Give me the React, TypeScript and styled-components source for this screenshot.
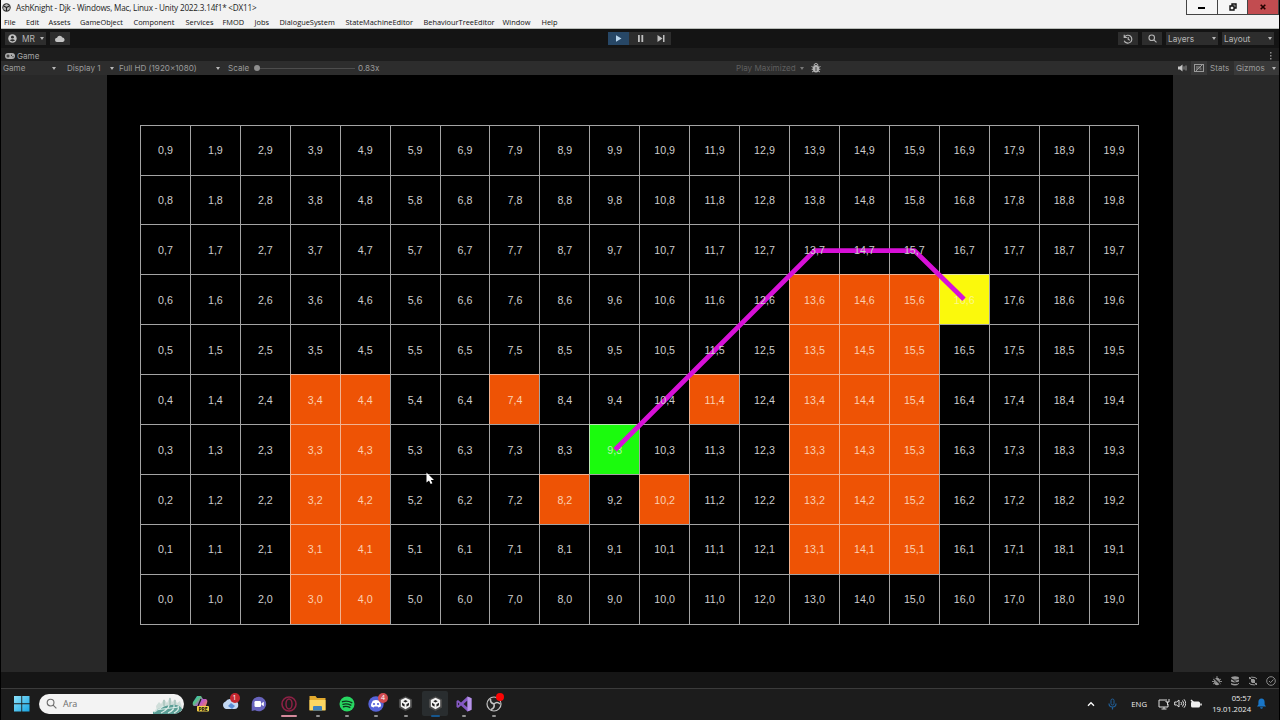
import React from 'react';
import styled, { createGlobalStyle } from 'styled-components';

const Global = createGlobalStyle`
  * { box-sizing: border-box; }
  body { margin: 0; background: #000; overflow: hidden; }
`;

const Screen = styled.div`
  width: 1280px; height: 720px; background: #000; padding: 0 1px;
  display: flex; flex-direction: column; font-family: Inter, Roboto, sans-serif;
`;
const WindowHead = styled.header`
  height: 29px; flex: none; background: #f2f2f2; border-bottom: 1px solid #b9bdb9;
  display: flex; justify-content: space-between;
  font-family: 'Open Sans', 'Noto Sans', sans-serif; color: #1c1c1c;
`;
const HeadLeft = styled.div`display: flex; flex-direction: column;`;
const TitleRow = styled.div`
  height: 15px; display: flex; align-items: center; gap: 5px; padding-left: 1px;
  font-size: 8.2px; letter-spacing: -0.21px; white-space: nowrap;
`;
const MenuRow = styled.nav`
  display: grid; height: 13px; align-items: center; padding-left: 3px;
  grid-template-columns: 22px 22.5px 31.5px 53.5px 52px 37px 32px 25px 66px 78px 79px 39px 40px;
  font-size: 7.4px; white-space: nowrap; color: #111;
`;
const WindowButtons = styled.div`display: flex; height: 15px; width: 93px; border: 1px solid #444; border-top: 0;`;
const WindowButton = styled.div<{ $close?: boolean }>`
  flex: 1; display: flex; align-items: center; justify-content: center;
  background: ${p => (p.$close ? '#c24c50' : '#f6f6f6')};
  & + & { border-left: 1px solid #444; }
`;

const Toolbar = styled.div`
  height: 19px; flex: none; background: #141414; display: grid; align-items: center;
  grid-template-columns: 1fr 63px 1fr; padding: 0 5px 0 4px;
`;
const Group = styled.div<{ $end?: boolean; $gap?: number }>`
  display: flex; align-items: center; gap: ${p => p.$gap ?? 4}px; justify-content: ${p => (p.$end ? 'flex-end' : 'flex-start')};
`;
const ToolButton = styled.div<{ $w: number; $on?: boolean; $spread?: boolean }>`
  width: ${p => p.$w}px; height: 13px; padding: 0 2px; display: flex; align-items: center;
  justify-content: ${p => (p.$spread ? 'space-between' : 'center')};
  background: ${p => (p.$on ? '#274766' : '#2d2d2d')}; color: #b6b6b6; font-size: 8.3px;
`;
const Caret = styled.i<{ $dim?: boolean }>`
  border: 2.5px solid transparent; border-top: 3px solid ${p => (p.$dim ? '#777' : '#b8b8b8')}; border-bottom: 0;
`;
const TabRow = styled.div`
  height: 13px; flex: none; background: #1d1d1d; color: #a5a5a5; font-size: 8.1px;
  display: flex; align-items: center; justify-content: space-between; padding: 2px 7px 0 4px;
`;
const Tab = styled.div`display: flex; align-items: center; gap: 2px;`;
const Options = styled.div`
  height: 14px; flex: none; background: #2d2d2d; color: #9b9b9b; font-size: 8.1px;
  display: flex; align-items: center; white-space: nowrap;
`;
const Option = styled.div<{ $w: number; $dim?: boolean; $lit?: boolean; $pad?: number; $indent?: number }>`
  width: ${p => p.$w}px; height: 14px; display: flex; align-items: center; justify-content: space-between;
  padding: 0 ${p => p.$pad ?? 2}px 0 ${p => p.$indent ?? p.$pad ?? 2}px;
  color: ${p => (p.$dim ? '#5f5f5f' : 'inherit')}; background: ${p => (p.$lit ? '#393939' : 'none')};
`;
const BugOption = styled(Option)`
  justify-content: flex-end; margin-right: 351px;
`;
const Slider = styled.div`
  width: 101px; height: 6px; margin: 0 3px; display: flex; align-items: center;
  &::before { content: ''; width: 6px; height: 6px; border-radius: 3px; background: #8f8f8f; }
  &::after { content: ''; flex: 1; height: 1px; background: #4d4d4d; }
`;
const Spring = styled.div`flex: 1;`;

const Viewport = styled.main`
  height: 597px; flex: none; background: #282828; padding: 0 106px; display: flex;
`;
const Camera = styled.div`flex: 1; background: #000; padding: 49.6px 0 0 33px;`;
const Board = styled.div`
  position: relative; width: 999px; height: 500px; display: grid;
  grid-template-columns: repeat(20, 49.93px); grid-template-rows: repeat(10, 49.93px);
`;
const fills: Record<string, string> = { wall: '#ee5305', start: '#1bfb0d', goal: '#fbf90c', open: '#000' };
const rules: Record<string, string> = { wall: '#f2b291', start: '#b9e6b4', goal: '#e4e4a0', open: '#a4a4a4' };
const inks: Record<string, string> = { wall: '#fbd0b2', start: '#b4f9ae', goal: '#fbf88a', open: '#cdcdcd' };
const Cell = styled.div<{ $kind: string }>`
  background: ${p => fills[p.$kind]};
  box-shadow: inset 1px 1px 0 ${p => rules[p.$kind]};
  display: flex; align-items: center; justify-content: center; padding: 1px 0 0 1px;
  font: 10.7px 'Liberation Sans', Arial, sans-serif;
  color: ${p => inks[p.$kind]};
`;
const Label = styled.span<{ $under: boolean }>`position: relative; z-index: ${p => (p.$under ? 0 : 2)};`;
const Overlay = styled.svg`position: absolute; left: 0; top: 0; z-index: 1; overflow: visible;`;
const BoardEdge = styled.div`
  position: absolute; inset: 0; border: 0 solid #a4a4a4; border-width: 0 1px 1px 0;
`;
const Pointer = styled.svg`position: absolute; left: 286px; top: 347.4px; z-index: 3;`;

const StatusBar = styled.div`
  height: 16px; flex: none; background: #151515; display: flex; justify-content: flex-end; align-items: center;
  gap: 8px; padding: 2px 3px 0 0; color: #8f8f8f;
`;
const Taskbar = styled.footer`
  height: 32px; flex: none; background: #1c1c1c; border-top: 1px solid #3b3b3b;
  display: flex; align-items: center; padding: 0 0 2px 12px;
`;
const Search = styled.div`
  width: 145px; height: 20px; margin: 0 2px 0 9px; border-radius: 10px; background: #f3f3f3; overflow: hidden;
  display: flex; align-items: center; padding-left: 7px; gap: 6px;
  font: 9px 'Open Sans', sans-serif; color: #6c6c6c;
`;
const Task = styled.div<{ $active?: boolean }>`
  width: 29.3px; height: 29px; display: flex; align-items: center; justify-content: center; position: relative;
  &::before { content: ''; position: absolute; inset: 2px 1.5px; border-radius: 2px; background: ${p => (p.$active ? '#292d2f' : 'none')}; }
  & > svg { position: relative; overflow: visible; }
`;
const Running = styled.i<{ $w: number; $c?: string }>`
  position: absolute; bottom: 1px; width: ${p => p.$w}px; height: 2px; border-radius: 1px; background: ${p => p.$c ?? '#929292'};
`;
const Badge = styled.span<{ $c: string; $right: number; $size?: number }>`
  position: absolute; right: ${p => p.$right}px; top: 4px;
  width: ${p => p.$size ?? 10}px; height: ${p => p.$size ?? 10}px; border-radius: 5px; background: ${p => p.$c};
  color: #fff; font: 7px/10px 'Open Sans', sans-serif; text-align: center;
`;
const Tray = styled.div`
  display: flex; align-items: center; color: #eee; font: 7.7px 'Open Sans', sans-serif; padding-right: 13px;
`;
const Mic = styled.svg`margin-left: 13px;`;
const Volume = styled.svg`margin: 0 4px;`;
const Language = styled.span`margin: 0 11px 0 14px;`;
const Clock = styled.div`width: 49px; margin: 0 6px 0 0; text-align: right; line-height: 10.5px; font-size: 7.6px;`;

const walls = new Set<string>(['7,4', '8,2', '10,2', '11,4']);
for (let y = 0; y <= 4; y++) { walls.add(`3,${y}`); walls.add(`4,${y}`); }
for (let y = 1; y <= 6; y++) for (let x = 13; x <= 15; x++) walls.add(`${x},${y}`);
const kindOf = (k: string) => (walls.has(k) ? 'wall' : k === '9,3' ? 'start' : k === '16,6' ? 'goal' : 'open');

const cells: string[] = [];
for (let y = 9; y >= 0; y--) for (let x = 0; x < 20; x++) cells.push(`${x},${y}`);

const menu = [
  'File', 'Edit', 'Assets', 'GameObject', 'Component', 'Services', 'FMOD', 'Jobs',
  'DialogueSystem', 'StateMachineEditor', 'BehaviourTreeEditor', 'Window', 'Help',
];

const UnityMark = () => (
  <svg width="15" height="15" viewBox="0 0 16 16">
    <path d="M8 .3 15 3.800v8.400L8 15.900 1 12.200V3.800z" fill="#4b4b4b" />
    <path d="M8 1.800 3 4.300v6.800L8 14.200l5-3.100V4.300z" fill="#f2f2f2" />
    <path d="M8 4.200 5.600 5.500 8 6.800l2.400-1.300zM4.300 7.300v2.600L7 11.500V8.900zM11.700 7.300v2.600L9 11.500V8.900z" fill="#222" />
  </svg>
);

const Magnifier = ({ size, sw = 1.5 }: { size: number; sw?: number }) => (
  <svg width={size} height={size} viewBox="0 0 12 12" fill="none" stroke="currentColor" strokeWidth={sw}>
    <circle cx="5" cy="5" r="3.7" /><path d="m7.800 7.800 3.500 3.500" />
  </svg>
);

export default function App() {
  return (
    <>
      <Global />
      <Screen>
        <WindowHead>
          <HeadLeft>
            <TitleRow>
              <svg width="9" height="9" viewBox="0 0 10 10">
                <circle cx="5" cy="5" r="4.700" fill="#333" /><path d="M5 1 8.500 3v4L5 9 1.500 7V3z" fill="#bbb" />
                <path d="M5 5v4M5 5 1.500 3M5 5l3.500-2" stroke="#222" strokeWidth="1.200" />
              </svg>
              <span>AshKnight - Djk - Windows, Mac, Linux - Unity 2022.3.14f1* &lt;DX11&gt;</span>
            </TitleRow>
            <MenuRow>{menu.map(m => <span key={m}>{m}</span>)}</MenuRow>
          </HeadLeft>
          <WindowButtons>
            <WindowButton><svg width="7" height="8"><path d="M0 5h7" stroke="#000" strokeWidth="2" /></svg></WindowButton>
            <WindowButton>
              <svg width="8" height="8" viewBox="0 0 8 8" fill="none" stroke="#111" strokeWidth="1.400"><path d="M1 3h4v4H1zM3 3V1h4v4H5" /></svg>
            </WindowButton>
            <WindowButton $close><svg width="6" height="6" viewBox="0 0 6 6"><path d="m.7.700 4.600 4.600m0-4.600L.7 5.300" stroke="#200" strokeWidth="1.600" /></svg></WindowButton>
          </WindowButtons>
        </WindowHead>

        <Toolbar>
          <Group>
            <ToolButton $w={41} $spread>
              <svg width="10" height="9" viewBox="-1 0 11 10">
                <circle cx="5" cy="5" r="4.700" fill="#c4c4c4" /><circle cx="5" cy="3.500" r="1.600" fill="#2d2d2d" /><path d="M2 7q3-2.500 6 0-3 2.500-6 0" fill="#2d2d2d" />
              </svg>
              MR<Caret />
            </ToolButton>
            <ToolButton $w={20}>
              <svg width="10" height="7" viewBox="0 0 10 7"><path d="M2.200 7A2.100 2.100 0 0 1 2 2.800 2.900 2.900 0 0 1 7.400 2.500 2.300 2.300 0 0 1 7.900 7z" fill="#c4c4c4" /></svg>
            </ToolButton>
          </Group>
          <Group $gap={0}>
            <ToolButton $w={21} $on><svg width="7" height="7" viewBox="0 0 7 7"><path d="M1 .3 6.500 3.500 1 6.700z" fill="#b9d6ee" /></svg></ToolButton>
            <ToolButton $w={22}><svg width="7" height="7" viewBox="0 0 7 7"><path d="M1 0h1.800v7H1zM4.400 0h1.800v7H4.400z" fill="#c0c0c0" /></svg></ToolButton>
            <ToolButton $w={20}><svg width="8" height="7" viewBox="0 0 8 7"><path d="M.5 0 5.500 3.500.5 7zM6 0h1.500v7H6z" fill="#c0c0c0" /></svg></ToolButton>
          </Group>
          <Group $end>
            <ToolButton $w={20}>
              <svg width="10" height="10" viewBox="0 0 12 12" fill="none" stroke="currentColor" strokeWidth="1.400"><path d="M1.800 3.800A4.700 4.700 0 1 1 1.500 8M1.500 1v3.200h3.200M6.200 3.500v2.800L8.200 7.500" /></svg>
            </ToolButton>
            <ToolButton $w={20}><Magnifier size={9} /></ToolButton>
            <ToolButton $w={52} $spread>Layers<Caret /></ToolButton>
            <ToolButton $w={52} $spread>Layout<Caret /></ToolButton>
          </Group>
        </Toolbar>

        <TabRow>
          <Tab>
            <svg width="10" height="6" viewBox="0 0 10 6"><rect width="10" height="6" rx="3" fill="#aaa" /><path d="M1.500 3h3M3 1.500v3M6 2.300h1M7.500 3.700h1" stroke="#222" /></svg>
            Game
          </Tab>
          <svg width="2" height="8"><path d="M0 0h1.500v1.500H0zM0 3h1.500v1.500H0zM0 6h1.500v1.500H0z" fill="#8c8c8c" /></svg>
        </TabRow>
        <Options>
          <Option $w={57}>Game<Caret /></Option>
          <Option $w={57} $pad={1} $indent={9}>Display 1<Caret /></Option>
          <Option $w={107} $indent={4}>Full HD (1920x1080)<Caret /></Option>
          <Option $w={29} $pad={0} $indent={6}>Scale</Option>
          <Slider />
          0.83x
          <Spring />
          <Option $w={68} $dim $pad={0}>Play Maximized<Caret $dim /></Option>
          <BugOption $w={19} $pad={1}>
            <svg width="12" height="10" viewBox="0 0 12 10">
              <ellipse cx="6" cy="5.800" rx="3.200" ry="3.700" fill="#b2b2b2" /><path d="M4 2.500q0-2 2-2t2 2M1.500 3.500l2 1M10.500 3.500l-2 1M1.700 6.300h8.600M2 9l2-1.200M10 9l-2-1.200" stroke="#b2b2b2" fill="none" /><path d="M5 5h2M5 7h2" stroke="#444" />
            </svg>
          </BugOption>
          <Option $w={17} $pad={4}>
            <svg width="9" height="8" viewBox="0 0 9 8"><path d="M0 2.500h2L4.500.5v7L2 5.500H0z" fill="#c6c6c6" /><path d="M6 2.300v3.400M8 1.500v5" stroke="#999" /></svg>
          </Option>
          <Option $w={16} $pad={3} $lit>
            <svg width="10" height="8" viewBox="0 0 10 8" fill="none" stroke="#999"><rect x=".5" y=".5" width="9" height="7" /><path d="M2 3h5M2 5h2M5.500 5h2M1.500 7.500l7-7" /></svg>
          </Option>
          <Option $w={27} $pad={3}>Stats</Option>
          <Option $w={36} $pad={2} $lit>Gizmos</Option>
          <Option $w={9} $pad={2} $lit><Caret /></Option>
        </Options>

        <Viewport>
          <Camera>
            <Board>
              {cells.map(k => {
                const kind = kindOf(k);
                return <Cell key={k} $kind={kind}><Label $under={kind === 'start' || kind === 'goal'}>{k}</Label></Cell>;
              })}
              <BoardEdge />
              <Overlay width="999" height="500" viewBox="0 0 999 500">
                <path d="M475 324.700 674.500 125.700H774.500L824 174.300" fill="none" stroke="#d710d7" strokeWidth="4.800" strokeLinejoin="round" />
              </Overlay>
              <Pointer width="9" height="13" viewBox="0 0 9 13"><path d="M.5.500v10L3 8.500 4.700 12l1.700-.8L4.800 7.900H8z" fill="#fff" /></Pointer>
            </Board>
          </Camera>
        </Viewport>

        <StatusBar>
          <svg width="10" height="10" viewBox="0 0 10 10"><ellipse cx="5" cy="5.500" rx="3" ry="3.700" fill="#999" /><path d="M1 3l8 5M9 3 1 8M5 0v2M0 5.500h10" stroke="#888" /><path d="m1 1 8 8" stroke="#222" strokeWidth="1.200" /></svg>
          <svg width="10" height="10" viewBox="0 0 10 10"><ellipse cx="5" cy="2" rx="4" ry="1.700" fill="#999" /><path d="M1 3.500q4 2 8 0v2q-4 2-8 0zM1 7q4 2 8 0v1.500q-4 2-8 0z" fill="#999" /><path d="m1 2 8 7" stroke="#222" /></svg>
          <svg width="10" height="10" viewBox="0 0 10 10" fill="none" stroke="#999"><path d="M1 3q2-3 6-1.500L9 3M9 7q-2 3-6 1.500L1 7M1 1l8 8" /><circle cx="5" cy="5" r="1.700" fill="#999" /></svg>
          <svg width="10" height="10" viewBox="0 0 10 10" fill="none" stroke="#8b8b8b"><circle cx="5" cy="5" r="4.300" /><path d="m3 5 1.600 1.600L7.500 3.500" /></svg>
        </StatusBar>

        <Taskbar>
          <svg width="17" height="17" viewBox="0 0 17 17"><defs><linearGradient id="win" x2="1" y2="1"><stop stopColor="#8de2fb" /><stop offset="1" stopColor="#18a5e2" /></linearGradient></defs><path d="M1 1h7.300v7.300H1zM9.200 1h7.300v7.300H9.200zM1 9.200h7.300v7.300H1zM9.200 9.200h7.300v7.300H9.200z" fill="url(#win)" /></svg>
          <Search>
            <Magnifier size={11} sw={1.2} />
            <span>Ara</span><Spring />
            <svg width="31" height="20" viewBox="0 0 31 20">
              <path d="M3 12 6 8l2 2 3-5 3 4 3-6 2 5 3-3 2 4 3-2 2 6v5H4z" fill="#d0deda" />
              <path d="M0 18q9-6 18-7 8-1 11 4v5H0z" fill="#5b9e96" />
              <path d="M1 18q8-4 10-7M8 19q8-4 8-8M15 19q7-3 6-8M21 19q6-3 4-7M2 16l24-3" stroke="#d9ece7" strokeWidth="1.200" fill="none" />
              <path d="M11 6v6M17 4v7M22 6v5" stroke="#93b6ad" />
            </svg>
          </Search>
          <Task>
            <svg width="17" height="17" viewBox="0 0 17 17">
              <defs><linearGradient id="cop" x1="0" y1="0" x2="1" y2=".8"><stop stopColor="#26a4ef" /><stop offset=".35" stopColor="#58c582" /><stop offset=".6" stopColor="#bd57cd" /><stop offset="1" stopColor="#f38655" /></linearGradient></defs>
              <path d="M5 1h4l2 3h3q2 1 1 4l-2 5H7l-2-2H2Q0 10 1 7z" fill="url(#cop)" />
              <path d="m9 4-3 7" stroke="#1c1c1c" strokeWidth="1.300" />
              <rect x="5" y="11" width="12" height="5.500" rx="1" fill="#f1d24c" /><text x="11" y="15.700" fontSize="5" fontWeight="700" textAnchor="middle" fontFamily="Open Sans">PRE</text>
            </svg>
          </Task>
          <Task>
            <svg width="16" height="13" viewBox="0 0 16 13"><path d="M4 12a4 4 0 0 1-.4-7.600A5 5 0 0 1 12 4a4 4 0 0 1 .5 8z" fill="#c3d8f3" /><path d="M6 9l3-3 4 3-3 3z" fill="#5c8dd5" /></svg>
            <Badge $c="#c4262e" $right={5}>1</Badge>
          </Task>
          <Task>
            <svg width="16" height="16" viewBox="0 0 16 16"><path d="M8 .7a7.300 7.300 0 1 1-4 13.500L.7 15V8A7.300 7.300 0 0 1 8 .7" fill="#6864bd" /><rect x="3.500" y="5" width="6.500" height="6" rx="1.200" fill="#fff" /><path d="m10.500 7.300 2.300-1.600v4.600l-2.300-1.600z" fill="#fff" /></svg>
          </Task>
          <Task>
            <svg width="16" height="16" viewBox="0 0 16 16" fill="none" stroke="#8d2145"><circle cx="8" cy="8" r="7" strokeWidth="1.600" /><ellipse cx="8" cy="8" rx="3" ry="5" strokeWidth="1.500" /></svg>
            <Running $w={16} $c="#d58b9c" />
          </Task>
          <Task>
            <svg width="17" height="15" viewBox="0 0 17 15"><path d="M.5 0h6L8 2H16.500v12H.5z" fill="#e3aa2e" /><path d="M.5 4h16v10.500H.5z" fill="#fbd763" /><path d="M4 14.500V11q0-1 1-1h7q1 0 1 1v3.500z" fill="#3c82bf" /></svg>
            <Running $w={4} />
          </Task>
          <Task>
            <svg width="16" height="16" viewBox="0 0 16 16"><circle cx="8" cy="8" r="7.500" fill="#27d761" /><path d="M3.500 5.700q4.800-1.500 9.300 1M4 8.300q4-1.100 7.800.9M4.500 10.700q3.300-.9 6.300.7" stroke="#10351c" strokeWidth="1.400" strokeLinecap="round" fill="none" /></svg>
            <Running $w={4} />
          </Task>
          <Task>
            <svg width="16" height="16" viewBox="0 0 16 16"><circle cx="8" cy="8" r="7.700" fill="#5663d9" /><path d="M4.800 4.700Q8 3.500 11.200 4.700q1.900 2.800 1.800 5.600-1.200 1-2.700 1.300l-.7-1.200H6.400l-.7 1.200Q4.200 11.300 3 10.300q-.1-2.800 1.800-5.600" fill="#fff" /><circle cx="6" cy="8" r="1.100" fill="#5663d9" /><circle cx="10" cy="8" r="1.100" fill="#5663d9" /></svg>
            <Badge $c="#d24b51" $right={3}>4</Badge><Running $w={4} />
          </Task>
          <Task><UnityMark /><Running $w={4} /></Task>
          <Task $active><UnityMark /><Running $w={9} $c="#16568d" /></Task>
          <Task>
            <svg width="16" height="16" viewBox="0 0 16 16"><path d="m11.500.5 4 1.700v11.600l-4 1.700L5 9.500 2 12 .5 11V5L2 4l3 2.500z" fill="#8559c3" /><path d="M11.500 4.500v7L7.500 8zM2 6.500v3L3.500 8z" fill="#222" /><path d="M11.500.5 15.500 2.200v11.600l-4 1.700z" fill="#b795e8" /></svg>
            <Running $w={4} />
          </Task>
          <Task>
            <svg width="16" height="16" viewBox="0 0 16 16" fill="none" stroke="#c3c3c3"><circle cx="8" cy="8" r="7" fill="#222" strokeWidth="1.200" /><path d="M8 8Q4 7 4.500 3M8 8q3-3 6 0M8 8q1 4-3 5.500" strokeWidth="1.600" /></svg>
            <Badge $c="#fb0505" $right={4} $size={8} /><Running $w={4} />
          </Task>
          <Spring />
          <Tray>
            <svg width="8" height="6" viewBox="0 0 8 6"><path d="m1 4.700 3-3 3 3" stroke="#fff" strokeWidth="1.300" fill="none" /></svg>
            <Mic width="9" height="12" viewBox="0 0 9 12" fill="none" stroke="#205f99"><rect x="3" y="1" width="3" height="6" rx="1.500" /><path d="M1 5.500q0 3.500 3.500 3.500T8 5.500M4.500 9v2.500" strokeWidth="1.200" /></Mic>
            <Language>ENG</Language>
            <svg width="12" height="12" viewBox="0 0 12 12" fill="none" stroke="#ddd"><path d="M7 2H1v7h9V6M3.500 11h5M6 9v2M8 1v3h3V1M9.500 4v3" /></svg>
            <Volume width="12" height="11" viewBox="0 0 12 11" fill="none" stroke="#ddd"><path d="M.7 4h2L5 2v7L2.700 7h-2zM7 4q1.200 1.500 0 3M8.500 2.500q2.600 3 0 6M10 1.300q3.500 4.200 0 8.400" /></Volume>
            <svg width="12" height="10" viewBox="0 0 12 10"><rect x="1" y="2.500" width="9" height="6" rx="1.500" fill="#eee" /><path d="M11 4.500v2M1 1l3 3" stroke="#eee" strokeWidth="1.500" /></svg>
            <Clock>05:57<br />19.01.2024</Clock>
            <svg width="9" height="11" viewBox="0 0 9 11"><path d="M4.500.5Q7.500.8 7.600 4v2.500L9 8.500H0l1.400-2V4Q1.500.8 4.500.5M3 9.300h3q-.5 1.500-1.500 1.500T3 9.300" fill="#1976c8" /></svg>
          </Tray>
        </Taskbar>
      </Screen>
    </>
  );
}
